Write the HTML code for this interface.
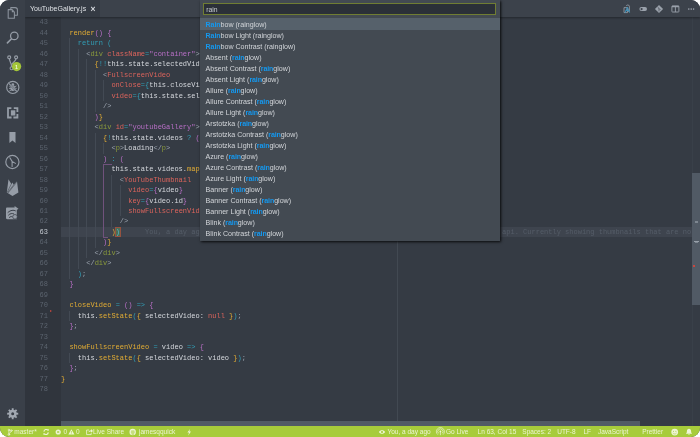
<!DOCTYPE html>
<html lang="en"><head><meta charset="utf-8"><title>YouTubeGallery.js</title>
<style>
html,body{margin:0;padding:0;background:#fff;}
body{width:700px;height:437px;overflow:hidden;position:relative;font-family:"Liberation Sans",sans-serif;}
#win{will-change:transform;position:absolute;left:0;top:0;width:700px;height:437px;border-radius:9px;overflow:hidden;background:#353b44;}
#act{position:absolute;left:0;top:0;width:25px;height:426px;background:#3a4049;}
#gut{position:absolute;left:25px;top:17px;width:36px;height:409px;background:#30353d;}
#tabbar{position:absolute;left:25px;top:0;width:675px;height:17px;background:#3c424b;box-shadow:0 1px 2px rgba(0,0,0,.35);}
#tab{position:absolute;left:0;top:0;width:75px;height:17px;background:#353b44;color:#dfe2e6;font-size:7px;line-height:18.8px;white-space:nowrap;}
#tab span.t{position:absolute;left:5px;top:0;}
#tab span.x{position:absolute;left:65.4px;top:0.3px;font-size:8.5px;font-weight:bold;color:#d5d8dd;}
.ln{position:absolute;left:25px;width:23px;text-align:right;font-family:"Liberation Mono",monospace;font-size:7px;color:#5b636e;height:10.48px;line-height:10.48px;}
.cl{position:absolute;left:61px;font-family:"Liberation Mono",monospace;font-size:7px;white-space:pre;height:10.48px;line-height:10.48px;color:#d6d9de;}
.W{color:#d6d9de}.Y{color:#e3ad34}.T{color:#319fb7}.P{color:#b86fc6}.G{color:#8c9c3c}.R{color:#dc645c}.S{color:#9aa2ad}
.GH{color:#555d68}
.BM{color:#58b4cf;outline:0.7px solid #96523f;outline-offset:0.1px;background:rgba(84,146,92,.55)}
.ig{position:absolute;width:0;border-left:0.6px solid #434a54;}
#curline{position:absolute;left:61px;top:226.6px;width:632px;height:10.4px;background:#3e444e;}
#status{position:absolute;left:0;top:425.5px;width:700px;height:11.5px;background:#a7cc3b;color:#ecf4d2;font-size:6.5px;line-height:11.7px;white-space:nowrap;}
#status span{position:absolute;top:0;}
#hscroll{position:absolute;left:61px;top:421px;width:579px;height:5px;background:#515b65;}
#vscroll{position:absolute;left:692px;top:172.5px;width:8px;height:132.5px;background:#515a65;}
#vline{position:absolute;left:692px;top:17px;width:1px;height:409px;background:#394049;}
#ruler{position:absolute;left:397px;top:17px;width:1px;height:409px;background:#424952;}
#qp{position:absolute;left:200px;top:0;width:300px;height:241px;background:#434a52;box-shadow:0.5px 1px 2.5px rgba(0,0,0,.85);}
#qpin{position:absolute;left:3px;top:3px;width:293px;height:12.4px;background:#2b3038;border:0.7px solid #707d33;box-sizing:border-box;color:#c8ccd2;font-size:6.8px;line-height:11.2px;}
#qpin span{position:absolute;left:2.3px;top:0;}
.qr{position:absolute;left:0;width:300px;height:11px;line-height:11px;font-size:7.1px;color:#d3d6da;white-space:nowrap;}
.qr span.t{position:absolute;left:5.6px;top:2px;}
.qr b{font-weight:bold;color:#1598ee;letter-spacing:-0.12px;}
.qr.sel{background:#56616b;height:12px;}
svg{position:absolute;overflow:visible;}
</style></head><body><div id="win">
<div id="gut"></div>
<div id="curline"></div>
<div id="ruler"></div>
<div class="ig" style="left:69.40px;top:38.31px;height:241.04px"></div>
<div class="ig" style="left:77.80px;top:48.79px;height:220.08px"></div>
<div class="ig" style="left:86.20px;top:59.27px;height:199.12px"></div>
<div class="ig" style="left:94.60px;top:69.75px;height:41.92px"></div>
<div class="ig" style="left:94.60px;top:132.63px;height:115.28px"></div>
<div class="ig" style="left:103.00px;top:80.23px;height:20.96px"></div>
<div class="ig" style="left:103.00px;top:143.11px;height:10.48px"></div>
<div class="ig" style="left:111.40px;top:174.55px;height:52.40px"></div>
<div class="ig" style="left:119.80px;top:185.03px;height:31.44px"></div>
<div class="ig" style="left:69.40px;top:310.79px;height:10.48px"></div>
<div class="ig" style="left:69.40px;top:352.71px;height:10.48px"></div>
<div style="position:absolute;left:102.90px;top:163.57px;width:8.6px;height:73.56px;border-left:0.6px solid #70527c;border-top:0.6px solid #70527c;"></div>
<div style="position:absolute;left:102.90px;top:237.13px;width:4.8px;height:0;border-top:0.6px solid #70527c;"></div>
<div class="ln" style="top:17.35px">43</div>
<div class="ln" style="top:27.83px">44</div><div class="cl" style="top:27.83px">  <span class="Y">render</span><span class="P">()</span> <span class="P">{</span></div>
<div class="ln" style="top:38.31px">45</div><div class="cl" style="top:38.31px">    <span class="T">return</span> <span class="T">(</span></div>
<div class="ln" style="top:48.79px">46</div><div class="cl" style="top:48.79px">      <span class="S">&lt;</span><span class="G">div</span> <span class="R">className</span><span class="T">=</span><span class="P">"container"</span><span class="S">&gt;</span></div>
<div class="ln" style="top:59.27px">47</div><div class="cl" style="top:59.27px">        <span class="Y">{</span><span class="T">!!</span>this.state.selectedVideo <span class="T">&amp;&amp;</span> <span class="P">(</span></div>
<div class="ln" style="top:69.75px">48</div><div class="cl" style="top:69.75px">          <span class="S">&lt;</span><span class="R">FullscreenVideo</span></div>
<div class="ln" style="top:80.23px">49</div><div class="cl" style="top:80.23px">            <span class="R">onClose</span><span class="T">={</span>this.closeVideo<span class="T">}</span></div>
<div class="ln" style="top:90.71px">50</div><div class="cl" style="top:90.71px">            <span class="R">video</span><span class="T">={</span>this.state.selectedVideo<span class="T">}</span></div>
<div class="ln" style="top:101.19px">51</div><div class="cl" style="top:101.19px">          <span class="S">/&gt;</span></div>
<div class="ln" style="top:111.67px">52</div><div class="cl" style="top:111.67px">        <span class="P">)</span><span class="Y">}</span></div>
<div class="ln" style="top:122.15px">53</div><div class="cl" style="top:122.15px">        <span class="S">&lt;</span><span class="G">div</span> <span class="R">id</span><span class="T">=</span><span class="P">"youtubeGallery"</span><span class="S">&gt;</span></div>
<div class="ln" style="top:132.63px">54</div><div class="cl" style="top:132.63px">          <span class="Y">{</span><span class="T">!</span>this.state.videos <span class="T">?</span> <span class="P">(</span></div>
<div class="ln" style="top:143.11px">55</div><div class="cl" style="top:143.11px">            <span class="S">&lt;</span><span class="G">p</span><span class="S">&gt;</span>Loading<span class="S">&lt;/</span><span class="G">p</span><span class="S">&gt;</span></div>
<div class="ln" style="top:153.59px">56</div><div class="cl" style="top:153.59px">          <span class="P">)</span> <span class="T">:</span> <span class="P">(</span></div>
<div class="ln" style="top:164.07px">57</div><div class="cl" style="top:164.07px">            this.state.videos.<span class="Y">map</span><span class="T">(</span>video <span class="T">=&gt;</span> <span class="Y">(</span></div>
<div class="ln" style="top:174.55px">58</div><div class="cl" style="top:174.55px">              <span class="S">&lt;</span><span class="R">YouTubeThumbnail</span></div>
<div class="ln" style="top:185.03px">59</div><div class="cl" style="top:185.03px">                <span class="R">video</span><span class="T">=</span><span class="P">{</span>video<span class="P">}</span></div>
<div class="ln" style="top:195.51px">60</div><div class="cl" style="top:195.51px">                <span class="R">key</span><span class="T">=</span><span class="P">{</span>video.id<span class="P">}</span></div>
<div class="ln" style="top:205.99px">61</div><div class="cl" style="top:205.99px">                <span class="R">showFullscreenVideo</span><span class="T">=</span><span class="P">{</span>this.showFullscreenVideo<span class="P">}</span></div>
<div class="ln" style="top:216.47px">62</div><div class="cl" style="top:216.47px">              <span class="S">/&gt;</span></div>
<div class="ln" style="top:226.95px;color:#c5cad1">63</div><div class="cl" style="top:226.95px">            <span class="Y">)</span><span class="BM">)</span>      <span class="GH">You, a day ago • Load the first page of the gallery videos from the YouTube playlist api. Currently showing thumbnails that are not</span></div>
<div class="ln" style="top:237.43px">64</div><div class="cl" style="top:237.43px">          <span class="P">)</span><span class="Y">}</span></div>
<div class="ln" style="top:247.91px">65</div><div class="cl" style="top:247.91px">        <span class="S">&lt;/</span><span class="G">div</span><span class="S">&gt;</span></div>
<div class="ln" style="top:258.39px">66</div><div class="cl" style="top:258.39px">      <span class="S">&lt;/</span><span class="G">div</span><span class="S">&gt;</span></div>
<div class="ln" style="top:268.87px">67</div><div class="cl" style="top:268.87px">    <span class="T">)</span><span class="S">;</span></div>
<div class="ln" style="top:279.35px">68</div><div class="cl" style="top:279.35px">  <span class="P">}</span></div>
<div class="ln" style="top:289.83px">69</div>
<div class="ln" style="top:300.31px">70</div><div class="cl" style="top:300.31px">  <span class="Y">closeVideo</span> <span class="T">=</span> <span class="P">()</span> <span class="T">=&gt;</span> <span class="P">{</span></div>
<div class="ln" style="top:310.79px">71</div><div class="cl" style="top:310.79px">    this.<span class="Y">setState</span><span class="T">(</span><span class="Y">{</span> selectedVideo: <span class="R">null</span> <span class="Y">}</span><span class="T">)</span><span class="S">;</span></div>
<div class="ln" style="top:321.27px">72</div><div class="cl" style="top:321.27px">  <span class="P">}</span><span class="S">;</span></div>
<div class="ln" style="top:331.75px">73</div>
<div class="ln" style="top:342.23px">74</div><div class="cl" style="top:342.23px">  <span class="Y">showFullscreenVideo</span> <span class="T">=</span> video <span class="T">=&gt;</span> <span class="P">{</span></div>
<div class="ln" style="top:352.71px">75</div><div class="cl" style="top:352.71px">    this.<span class="Y">setState</span><span class="T">(</span><span class="Y">{</span> selectedVideo: video <span class="Y">}</span><span class="T">)</span><span class="S">;</span></div>
<div class="ln" style="top:363.19px">76</div><div class="cl" style="top:363.19px">  <span class="P">}</span><span class="S">;</span></div>
<div class="ln" style="top:373.67px">77</div><div class="cl" style="top:373.67px"><span class="Y">}</span></div>
<div class="ln" style="top:384.15px">78</div>
<div style="position:absolute;left:50px;top:310px;width:0;height:0;border-left:2.4px solid #d0493f;border-top:1.5px solid transparent;border-bottom:1.5px solid transparent"></div>
<div id="hscroll"></div><div id="vline"></div><div id="vscroll"></div>
<div style="position:absolute;left:695px;top:220.5px;width:2.5px;height:2px;background:#7d8690"></div>
<div style="position:absolute;left:694px;top:240.5px;width:5px;height:1px;background:#98a0aa"></div>
<div style="position:absolute;left:695px;top:241.5px;width:2.5px;height:1.5px;background:#7d8690"></div>
<div style="position:absolute;left:693px;top:265px;width:2px;height:2px;background:#c9473e"></div>
<div id="tabbar"><div id="tab"><span class="t">YouTubeGallery.js</span><span class="x">×</span></div></div>
<svg style="left:0.00px;top:0.00px" width="700.00" height="17.00" viewBox="0 0 700 17" ><path fill="none" stroke="#9aa1ab" stroke-width="0.8" stroke-linejoin="round" d="M626.2 6.1c.3-1.4 2.8-1.6 3.2 0v5.2h-2"/><path fill="none" stroke="#9aa1ab" stroke-width="0.8" stroke-linejoin="round" d="M624 7.6h3.6v5h-3.6z"/><path fill="none" stroke="#3d92bb" stroke-width="1" stroke-linecap="round" stroke-linejoin="round" d="M625.3 12.300l2.100-5.200 2.100 5.200M626 10.600h2.800"/><rect x="639.4" y="7.1" width="7.6" height="3.9" rx="1.95" fill="#9aa1ab"/><circle cx="641.6" cy="9.05" r="1.1" fill="#3c424b"/><path fill="#9aa1ab" d="M659 4.9l4.1 4.1-4.1 4.1-4.1-4.1z"/><path fill="none" stroke="#3c424b" stroke-width="0.6" d="M657.6 7l1.4 1.4v3M659 8.4l1.6 1.6"/><rect x="671.9" y="6" width="7" height="6" rx=".6" fill="none" stroke="#9aa1ab" stroke-width="0.9"/><path fill="none" stroke="#9aa1ab" stroke-width="0.9" d="M675.4 6v6"/><path stroke="#9aa1ab" stroke-width="1.500" d="M671.900 6.500h7"/><circle cx="688.8" cy="9.1" r=".8" fill="#9aa1ab"/><circle cx="691.2" cy="9.1" r=".8" fill="#9aa1ab"/><circle cx="693.6" cy="9.1" r=".8" fill="#9aa1ab"/></svg>

<div id="act"></div>
<svg style="left:0.00px;top:0.00px" width="25.00" height="426.00" viewBox="0 0 25 426" ><path fill="none" stroke="#8c939d" stroke-width="1.05" stroke-linejoin="round" stroke-linecap="round" d="M10.8 9.2V7.6h4.4c1.3 0 2.2 1 2.2 2.2v5.5h-2.9"/><path fill="none" stroke="#8c939d" stroke-width="1.05" stroke-linejoin="round" stroke-linecap="round" d="M8.2 9.6h3.9l2.3 2.4v6.2H8.2z"/><path fill="#8c939d" d="M11.8 9.6l2.6 2.7h-2.6z"/><circle fill="none" stroke="#969da7" stroke-width="1.25" stroke-linecap="round" cx="14.3" cy="35.9" r="3.75"/><path fill="none" stroke="#969da7" stroke-width="1.6" stroke-linecap="round" d="M11.3 39L7.4 42.9"/><circle fill="none" stroke="#969da7" stroke-width="1.15" stroke-linecap="round" cx="9.2" cy="57.3" r="1.5"/><circle fill="none" stroke="#969da7" stroke-width="1.15" stroke-linecap="round" cx="16.1" cy="57.3" r="1.5"/><circle fill="none" stroke="#969da7" stroke-width="1.15" stroke-linecap="round" cx="11.6" cy="68.2" r="1.5"/><path fill="none" stroke="#969da7" stroke-width="1.15" stroke-linecap="round" d="M9.4 58.9c0.3 2.6 2.0 4.5 2.2 7.7M15.9 58.9c-0.3 2.4-3.2 3.6-4.1 5.6"/><circle cx="16.6" cy="66.6" r="4.6" fill="#a4c639"/><circle fill="none" stroke="#969da7" stroke-width="1.15" stroke-linecap="round" cx="12.8" cy="87.4" r="6.1"/><ellipse cx="12.8" cy="88.100" rx="2.400" ry="2.900" fill="#969da7"/><circle cx="12.8" cy="84.600" r="1.400" fill="#969da7"/><path fill="none" stroke="#969da7" stroke-width="0.9" d="M9.200 86l2.200 1M16.400 86l-2.200 1M9 88.400h2M16.600 88.400h-2M9.400 91l2-1.100M16.200 91l-2-1.100"/><path fill="none" stroke="#3a4049" stroke-width="1.700" d="M8.6 83.2l8.4 8.4"/><path fill="none" stroke="#969da7" stroke-width="1.15" stroke-linecap="round" d="M8.6 83.2l8.4 8.4"/><path fill="none" stroke="#969da7" stroke-width="1.8" d="M11.4 108.2H8v9.3h3.6M13.4 117.5h4v-3.4M13.8 108.2h3.6v3.8"/><rect x="10.9" y="110.3" width="4.4" height="5.2" fill="#969da7"/><path fill="#969da7" d="M9.4 132h6.1v11l-3.05-2.6L9.4 143z"/><circle fill="none" stroke="#969da7" stroke-width="1.15" stroke-linecap="round" cx="12.4" cy="162" r="6.6"/><path fill="none" stroke="#969da7" stroke-width="1.1" stroke-linecap="round" stroke-linejoin="round" d="M9.9 157.8l2.2 3.6v5M12.1 161.4l3.3 2"/><path fill="#969da7" d="M6.8 192.6L8.5 179.2l2.8 4.9 1.1-1.6 1.3 2.2 3.3-3.1 1.4 10.9-5.9 3.6z"/><path fill="none" stroke="#3a4049" stroke-width="0.5" d="M7.2 192.2L12.3 182M7.6 192.6L14 184.4M8 193l8.6-10.6"/><path fill="#969da7" d="M7.2 207.6h7.4v-1.6l3.9 2.7-3.9 2.7v-1.5h2.2v9.3H7.2c-.7 0-1.2-.5-1.2-1.2v-9.200c0-.7.5-1.200 1.2-1.200z"/><path fill="none" stroke="#3a4049" stroke-width="1" stroke-linecap="round" d="M8 212.4c2.600-2.400 5.600-2.600 7.400-1.600M8.600 215c1.600-1.600 3.600-1.900 5-1.200M9.400 217.400c.9-.9 1.900-1.100 2.800-.7"/><circle cx="15" cy="216.800" r="2.300" fill="#969da7" stroke="#3a4049" stroke-width="0.7"/><path fill="#a1a8b1" fill-rule="evenodd" d="M18.22 412.75 L18.22 414.65 L16.70 414.59 L16.16 415.90 L17.27 416.93 L15.93 418.27 L14.90 417.16 L13.59 417.70 L13.65 419.22 L11.75 419.22 L11.81 417.70 L10.50 417.16 L9.47 418.27 L8.13 416.93 L9.24 415.90 L8.70 414.59 L7.18 414.65 L7.18 412.75 L8.70 412.81 L9.24 411.50 L8.13 410.47 L9.47 409.13 L10.50 410.24 L11.81 409.70 L11.75 408.18 L13.65 408.18 L13.59 409.70 L14.90 410.24 L15.93 409.13 L17.27 410.47 L16.16 411.50 L16.70 412.81Z M11.20 413.70a1.5 1.5 0 1 0 3 0a1.5 1.5 0 1 0 -3 0z"/><text x="16.6" y="68.6" font-family="Liberation Sans, sans-serif" font-size="5.4" font-weight="bold" fill="#eef5d2" text-anchor="middle">1</text></svg>

<div id="qp"><div id="qpin"><span>rain</span></div>
<div class="qr sel" style="top:18.00px"><span class="t"><b>Rain</b>bow (rainglow)</span></div>
<div class="qr" style="top:29.00px"><span class="t"><b>Rain</b>bow Light (rainglow)</span></div>
<div class="qr" style="top:40.00px"><span class="t"><b>Rain</b>bow Contrast (rainglow)</span></div>
<div class="qr" style="top:51.00px"><span class="t">Absent (<b>rain</b>glow)</span></div>
<div class="qr" style="top:62.00px"><span class="t">Absent Contrast (<b>rain</b>glow)</span></div>
<div class="qr" style="top:73.00px"><span class="t">Absent Light (<b>rain</b>glow)</span></div>
<div class="qr" style="top:84.00px"><span class="t">Allure (<b>rain</b>glow)</span></div>
<div class="qr" style="top:95.00px"><span class="t">Allure Contrast (<b>rain</b>glow)</span></div>
<div class="qr" style="top:106.00px"><span class="t">Allure Light (<b>rain</b>glow)</span></div>
<div class="qr" style="top:117.00px"><span class="t">Arstotzka (<b>rain</b>glow)</span></div>
<div class="qr" style="top:128.00px"><span class="t">Arstotzka Contrast (<b>rain</b>glow)</span></div>
<div class="qr" style="top:139.00px"><span class="t">Arstotzka Light (<b>rain</b>glow)</span></div>
<div class="qr" style="top:150.00px"><span class="t">Azure (<b>rain</b>glow)</span></div>
<div class="qr" style="top:161.00px"><span class="t">Azure Contrast (<b>rain</b>glow)</span></div>
<div class="qr" style="top:172.00px"><span class="t">Azure Light (<b>rain</b>glow)</span></div>
<div class="qr" style="top:183.00px"><span class="t">Banner (<b>rain</b>glow)</span></div>
<div class="qr" style="top:194.00px"><span class="t">Banner Contrast (<b>rain</b>glow)</span></div>
<div class="qr" style="top:205.00px"><span class="t">Banner Light (<b>rain</b>glow)</span></div>
<div class="qr" style="top:216.00px"><span class="t">Blink (<b>rain</b>glow)</span></div>
<div class="qr" style="top:227.00px"><span class="t">Blink Contrast (<b>rain</b>glow)</span></div>
</div>
<div id="status">
<svg style="left:0.00px;top:0.00px" width="700.00" height="11.50" viewBox="0 0 700 11.5" ><circle fill="none" stroke="#eef5d6" stroke-width="0.7" stroke-linecap="round" cx="8.9" cy="4" r=".8"/><circle fill="none" stroke="#eef5d6" stroke-width="0.7" stroke-linecap="round" cx="11.3" cy="4.6" r=".8"/><circle fill="none" stroke="#eef5d6" stroke-width="0.7" stroke-linecap="round" cx="8.9" cy="8.6" r=".8"/><path fill="none" stroke="#eef5d6" stroke-width="0.7" stroke-linecap="round" d="M8.9 4.8v3M11.3 5.4c0 1.4-2.2 1.2-2.4 2.4"/><path fill="none" stroke="#eef5d6" stroke-width="1.100" d="M43.900 5.600a2.300 2.300 0 0 1 4.200-1.100M48.300 6.400a2.300 2.300 0 0 1 -4.200 1.100"/><path fill="#eef5d6" d="M47.2 3.2l1.6 0 0 1.9zM45 8.8l-1.6 0 0-1.9z"/><circle cx="58.2" cy="6" r="2.6" fill="#eef5d6"/><path stroke="#a7cc3b" stroke-width="0.8" d="M57.1 4.9l2.2 2.2M59.3 4.9l-2.2 2.2"/><path fill="#eef5d6" d="M71.4 3.2l3 5.4h-6z"/><path stroke="#a7cc3b" stroke-width="0.7" d="M71.4 5v1.8M71.4 7.4v.7"/><path fill="none" stroke="#eef5d6" stroke-width="0.8" d="M89 4h-2.4v4.6h4.6V7"/><path fill="#eef5d6" d="M88.4 6.6c.3-1.6 1.4-2.4 2.6-2.4V3l2 1.9-2 1.9V5.6c-1 0-1.8.2-2.6 1z"/><circle cx="132.700" cy="6" r="3.200" fill="#eef5d6"/><path fill="#a7cc3b" d="M131.700 9.300v-1.500c-.5-.2-1-.8-.9-1.700 0-.5.200-.9.500-1.200l.1-.9.900.4c.3-.1.700-.1 1 0l.9-.4.100.9c.3.300.5.700.5 1.200.1.900-.4 1.500-.9 1.700v1.500z" opacity=".55"/><path fill="#eef5d6" d="M190 3l-2.600 3.600h1.700l-.9 2.800 2.800-3.800h-1.700z"/><path fill="#eef5d6" d="M378.900 6c1.200-2.400 5-2.400 6.200 0-1.200 2.400-5 2.400-6.200 0z"/><circle cx="382" cy="6" r="1.100" fill="#a7cc3b"/><circle cx="440.4" cy="5.400" r=".9" fill="#eef5d6"/><path fill="none" stroke="#eef5d6" stroke-width="0.7" d="M440.4 6v3.200M438.600 7.400a2.600 2.600 0 1 1 3.600 0M437.800 8.600a4 4 0 1 1 5.200 0"/><circle cx="674.700" cy="6.100" r="3.400" fill="#eef5d6"/><circle cx="673.500" cy="5.300" r=".5" fill="#a7cc3b"/><circle cx="675.900" cy="5.300" r=".5" fill="#a7cc3b"/><path fill="none" stroke="#a7cc3b" stroke-width="0.55" d="M672.800 7c.9 1.300 2.900 1.300 3.800 0"/><path fill="#eef5d6" d="M689 2.800c1.400 0 2.100 1 2.100 2.400 0 1.400.5 2 1 2.500h-6.200c.5-.5 1-1.100 1-2.500 0-1.400.7-2.400 2.100-2.400zM688.200 8.300h1.600c0 .5-.4.800-.8.800s-.8-.3-.8-.8z"/></svg>

<span style="left:14.3px">master*</span><span style="left:63.6px">0</span><span style="left:76.0px">0</span><span style="left:93.0px">Live Share</span><span style="left:139.0px">jamesqquick</span><span style="left:387.5px">You, a day ago</span><span style="left:446.0px">Go Live</span><span style="left:477.6px">Ln 63, Col 15</span><span style="left:522.3px">Spaces: 2</span><span style="left:557.2px">UTF-8</span><span style="left:583.4px">LF</span><span style="left:598.0px">JavaScript</span><span style="left:642.2px">Prettier</span>
</div>
</div></body></html>
